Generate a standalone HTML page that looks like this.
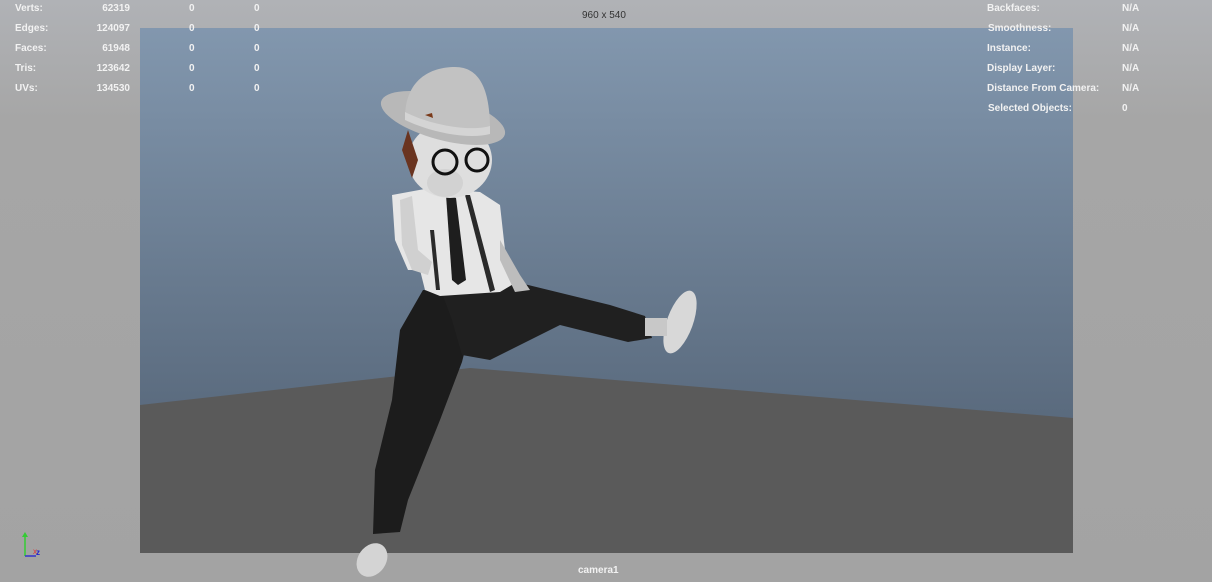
<!DOCTYPE html>
<html><head><style>
body{margin:0;width:1212px;height:582px;overflow:hidden;background:#a5a5a5;font-family:"Liberation Sans",sans-serif;}
.bg{position:absolute;left:0;top:0;width:1212px;height:582px;background:linear-gradient(#b0b2b6,#a6a6a6 120px,#a3a3a3);}
.t{position:absolute;font-size:10px;font-weight:bold;color:#f2f2f2;white-space:nowrap;line-height:12px;margin-top:1px;}
.r{text-align:right;}
</style></head><body>
<div class="bg"></div>
<svg style="position:absolute;left:0;top:0" width="1212" height="582">
<defs><linearGradient id="sky" x1="0" y1="0" x2="0" y2="1">
<stop offset="0" stop-color="#8297ae"/><stop offset="1" stop-color="#4c5b6d"/></linearGradient></defs>
<rect x="140" y="28" width="933" height="525" fill="url(#sky)"/>
<polygon points="140,405 470,368 1073,418 1073,553 140,553" fill="#5a5a5a"/>
<!-- standing leg -->
<polygon points="423,290 470,292 470,330 462,362 440,420 408,500 400,532 373,534 375,470 392,400 400,330" fill="#1c1c1c"/>
<!-- kick leg -->
<polygon points="440,288 520,283 610,305 645,316 652,338 628,342 560,325 490,360 462,355 452,320" fill="#202020"/>
<!-- shoes -->
<ellipse cx="680" cy="322" rx="13" ry="33" transform="rotate(20 680 322)" fill="#d8d8d8"/>
<rect x="645" y="318" width="22" height="18" fill="#c8c8c8"/>
<ellipse cx="372" cy="560" rx="14" ry="18" transform="rotate(35 372 560)" fill="#d4d4d4"/>
<!-- shirt -->
<path d="M392,195 L430,188 L480,192 L500,205 L505,250 L520,280 L500,292 L440,296 L425,290 L420,270 L408,270 L395,240 Z" fill="#e6e6e6"/>
<path d="M500,240 L520,275 L530,290 L515,292 L500,260 Z" fill="#bdbdbd"/>
<path d="M400,200 L412,196 L418,250 L432,262 L428,275 L412,270 L402,245 Z" fill="#d0d0d0"/>
<polygon points="446,195 456,198 466,280 458,285 452,280" fill="#1e1e1e"/>
<polygon points="465,195 470,195 495,290 490,292" fill="#2a2a2a"/>
<polygon points="430,230 434,230 440,290 436,290" fill="#2a2a2a"/>
<!-- head -->
<ellipse cx="450" cy="160" rx="42" ry="38" fill="#dedede"/>
<path d="M408,130 L418,160 L412,178 L402,150 Z" fill="#6a3420"/>
<ellipse cx="445" cy="183" rx="18" ry="14" fill="#d2d2d2"/>
<circle cx="445" cy="162" r="12" fill="none" stroke="#111" stroke-width="3"/>
<circle cx="477" cy="160" r="11" fill="none" stroke="#111" stroke-width="3"/>
<!-- hat -->
<ellipse cx="443" cy="118" rx="64" ry="22" transform="rotate(15 443 118)" fill="#b8b8b8"/>
<path d="M405,118 C405,80 430,67 455,67 C480,67 490,90 490,130 C470,138 430,130 405,118 Z" fill="#c2c2c2"/>
<path d="M405,112 C430,125 470,132 490,126 L490,134 C468,140 430,132 405,120 Z" fill="#d4d4d4"/>
<path d="M425,115 L432,113 L433,118 Z" fill="#7a3a1a"/>
<!-- axis -->
<line x1="25" y1="536" x2="25" y2="556" stroke="#3c3" stroke-width="1.5"/>
<polygon points="22,537 28,537 25,532" fill="#3c3"/>
<line x1="25" y1="556" x2="36" y2="556" stroke="#33c" stroke-width="1.5"/>
<text x="33" y="554" font-size="8" fill="#d33" font-family="Liberation Sans">x</text>
<text x="36" y="555" font-size="8" fill="#22c" font-family="Liberation Sans" font-weight="bold">z</text>
</svg>
<div class="t" style="left:15px;top:2px">Verts:</div><div class="t r" style="left:70px;top:2px;width:60px">62319</div>
<div class="t" style="left:15px;top:22px">Edges:</div><div class="t r" style="left:70px;top:22px;width:60px">124097</div>
<div class="t" style="left:15px;top:42px">Faces:</div><div class="t r" style="left:70px;top:42px;width:60px">61948</div>
<div class="t" style="left:15px;top:62px">Tris:</div><div class="t r" style="left:70px;top:62px;width:60px">123642</div>
<div class="t" style="left:15px;top:82px">UVs:</div><div class="t r" style="left:70px;top:82px;width:60px">134530</div>
<div class="t" style="left:189px;top:2px">0</div><div class="t" style="left:254px;top:2px">0</div>
<div class="t" style="left:189px;top:22px">0</div><div class="t" style="left:254px;top:22px">0</div>
<div class="t" style="left:189px;top:42px">0</div><div class="t" style="left:254px;top:42px">0</div>
<div class="t" style="left:189px;top:62px">0</div><div class="t" style="left:254px;top:62px">0</div>
<div class="t" style="left:189px;top:82px">0</div><div class="t" style="left:254px;top:82px">0</div>
<div class="t" style="left:582px;top:9px;color:#333;font-weight:normal">960 x 540</div>
<div class="t" style="left:987px;top:2px">Backfaces:</div><div class="t" style="left:1122px;top:2px">N/A</div>
<div class="t" style="left:988px;top:22px">Smoothness:</div><div class="t" style="left:1122px;top:22px">N/A</div>
<div class="t" style="left:987px;top:42px">Instance:</div><div class="t" style="left:1122px;top:42px">N/A</div>
<div class="t" style="left:987px;top:62px">Display Layer:</div><div class="t" style="left:1122px;top:62px">N/A</div>
<div class="t" style="left:987px;top:82px">Distance From Camera:</div><div class="t" style="left:1122px;top:82px">N/A</div>
<div class="t" style="left:988px;top:102px">Selected Objects:</div><div class="t" style="left:1122px;top:102px">0</div>
<div class="t" style="left:578px;top:564px">camera1</div>
</body></html>
